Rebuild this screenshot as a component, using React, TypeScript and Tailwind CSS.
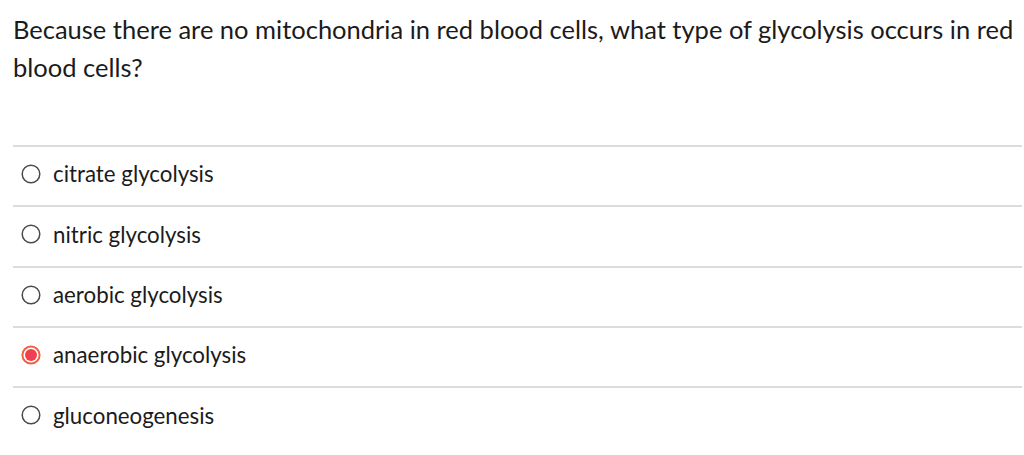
import React from "react";

const options = [
  { label: "citrate glycolysis", selected: false },
  { label: "nitric glycolysis", selected: false },
  { label: "aerobic glycolysis", selected: false },
  { label: "anaerobic glycolysis", selected: true },
  { label: "gluconeogenesis", selected: false },
];

function Radio({ selected }: { selected: boolean }) {
  if (selected) {
    return (
      <svg width="20" height="20" viewBox="0 0 20 20" className="shrink-0">
        <circle cx="10" cy="10" r="8.6" fill="none" stroke="#f2603f" strokeWidth="2" />
        <circle cx="10" cy="10" r="6" fill="#f0404f" />
      </svg>
    );
  }
  return (
    <svg width="20" height="20" viewBox="0 0 20 20" className="shrink-0">
      <circle cx="10" cy="10" r="8.8" fill="none" stroke="#4a4a4a" strokeWidth="1.5" />
    </svg>
  );
}

export default function App() {
  return (
    <div
      className="w-[1024px] h-[455px] bg-white pl-[13px] pr-[2px] pt-[10px] text-[#1b1b1b] overflow-hidden"
      style={{ fontFamily: "Lato, 'Open Sans', sans-serif" }}
    >
      <p className="text-[25.5px] leading-[38px]">
        Because there are no mitochondria in red blood cells, what type of glycolysis occurs in red blood cells?
      </p>
      <div className="mt-[59px]">
        {options.map((o) => (
          <div
            key={o.label}
            className="border-t-2 border-[#dcdcdc] h-[60.3px] flex items-center gap-[12px] pl-[8px] pb-[4px]"
          >
            <Radio selected={o.selected} />
            <span className="text-[22.3px]">{o.label}</span>
          </div>
        ))}
      </div>
    </div>
  );
}
